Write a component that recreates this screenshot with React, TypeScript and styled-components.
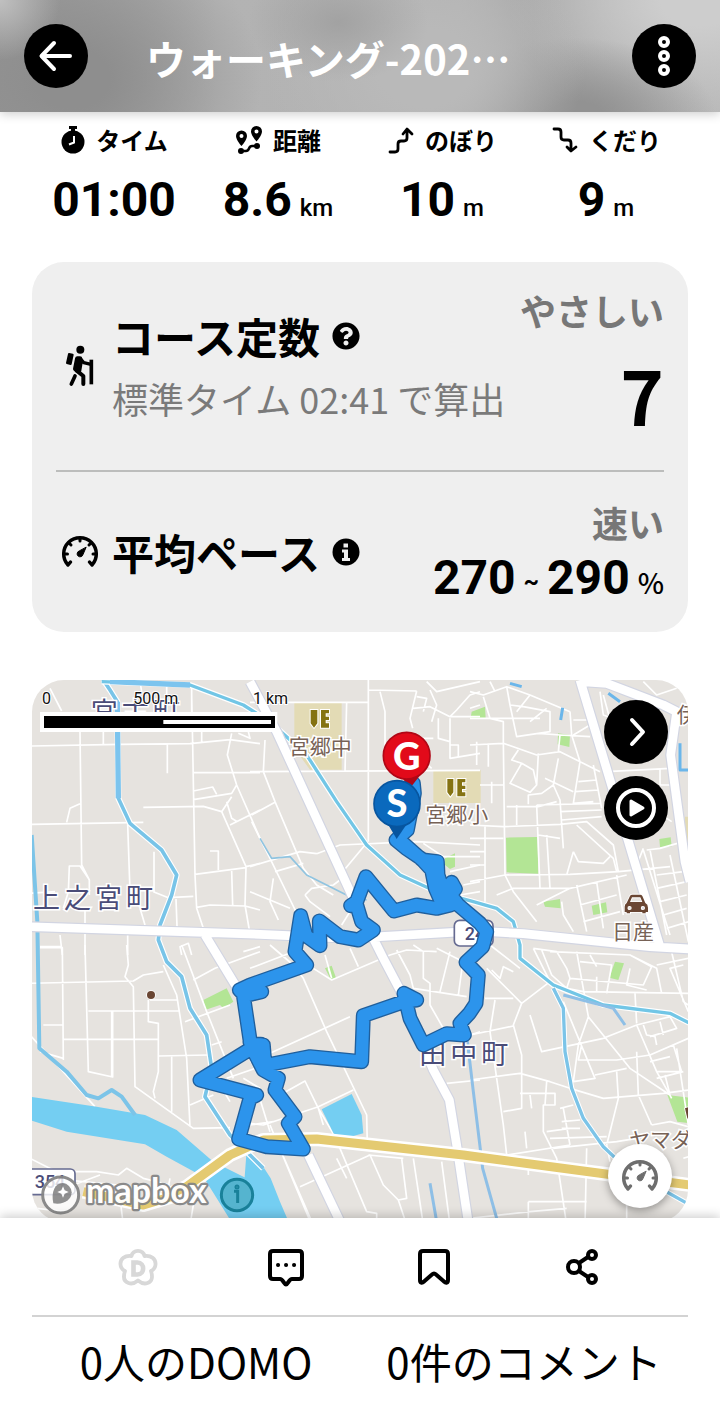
import React from "react";
import styled, { createGlobalStyle } from "styled-components";
import { FaQuestionCircle } from "react-icons/fa";

const JP = `"Noto Sans CJK JP", "Noto Sans", sans-serif`;
const NUM = `Roboto, "Noto Sans CJK JP", sans-serif`;

const GlobalStyle = createGlobalStyle`
  *, *::before, *::after { box-sizing: border-box; }
  body { margin: 0; background: #fff; color: #000; font-family: ${JP}; }
  button { border: 0; padding: 0; background: none; color: inherit; font: inherit; cursor: pointer; }
  svg { display: block; flex: none; }
`;

const Screen = styled.div`
  display: flex;
  flex-direction: column;
  height: 100vh;
`;

const Header = styled.header`
  position: relative;
  z-index: 2;
  flex: none;
  display: flex;
  align-items: center;
  justify-content: space-between;
  height: 112px;
  padding: 0 24px;
  box-shadow: 0 2px 10px rgba(0, 0, 0, 0.2);
  background:
    radial-gradient(ellipse 60px 60px at 0% 0%, #c0c0c0, transparent),
    radial-gradient(ellipse 190px 150px at 10% 70%, #8e8e8e 20%, transparent),
    radial-gradient(ellipse 90px 60px at 47% 20%, #a2a2a2, transparent),
    radial-gradient(ellipse 160px 130px at 59% 60%, #b9b9b9 30%, transparent),
    radial-gradient(ellipse 140px 80px at 80% 105%, #929292 20%, transparent),
    radial-gradient(ellipse 190px 130px at 97% 0%, #cdcdcd 20%, transparent),
    linear-gradient(90deg, #989898, #b3b3b3 30%, #b2b2b2 64%, #a6a6a6 74%, #b6b6b6);
`;

const Title = styled.h1`
  flex: 1;
  margin: 0 58px;
  padding-top: 4px;
  color: #fff;
  font-size: 40px;
  line-height: 64px;
  font-weight: 700;
  white-space: nowrap;
`;

const RoundButton = styled.button<{ $light?: boolean }>`
  display: grid;
  place-items: center;
  flex: none;
  width: 64px;
  height: 64px;
  border-radius: 50%;
  background: ${(p) => (p.$light ? "#fff" : "#000")};
  color: ${(p) => (p.$light ? "#6e6e6e" : "#fff")};
  box-shadow: ${(p) => (p.$light ? "0 3px 8px rgba(0, 0, 0, 0.35)" : "none")};
`;

const Main = styled.main`
  flex: 1;
  min-height: 0;
  overflow-y: auto;
  scrollbar-width: none;
  padding: 12px 32px 0;
`;

const Stats = styled.dl`
  display: grid;
  grid-template-columns: repeat(4, 1fr);
  margin: 0 0 26px;
`;

const Stat = styled.div`
  display: flex;
  flex-direction: column;
  align-items: center;
  gap: 16px;
`;

const StatLabel = styled.dt`
  display: flex;
  align-items: center;
  gap: 10px;
  font-size: 24px;
  line-height: 32px;
  font-weight: 700;
  white-space: nowrap;
`;

const StatValue = styled.dd`
  margin: 0;
  font: 700 48px/56px ${NUM};
  white-space: nowrap;
`;

const Unit = styled.span`
  margin-left: 8px;
  font-size: 24px;
  font-weight: 500;
`;

const Card = styled.section`
  padding: 0 24px;
  border-radius: 32px;
  background: #efefef;
`;

const Result = styled.div`
  display: flex;
  flex-direction: column;
  align-items: flex-end;
  white-space: nowrap;
`;

const CardRow = styled.div<{ $height: number }>`
  display: flex;
  align-items: center;
  gap: 8px;
  min-height: ${(p) => p.$height}px;

  & + & {
    border-top: 2px solid #bcbdbc;
  }

  & + & ${Result} {
    padding-top: 6px;
  }
`;

const IconSlot = styled.span`
  display: grid;
  place-items: center;
  flex: none;
  width: 48px;
`;

const RowText = styled.div`
  flex: 1;
  min-width: 0;
`;

const RowTitle = styled.h2`
  display: flex;
  align-items: center;
  gap: 12px;
  margin: 0;
  font-size: 42px;
  line-height: 64px;
  font-weight: 700;
  white-space: nowrap;
`;

const RowNote = styled.p`
  margin: 0;
  color: #7a7a7a;
  font-size: 36px;
  line-height: 60px;
  font-weight: 400;
  white-space: nowrap;
`;

const Grade = styled.span`
  color: #777;
  font-size: 36px;
  line-height: 56px;
  font-weight: 700;
`;

const BigNumber = styled.strong`
  font-size: 74px;
  line-height: 112px;
  font-weight: 700;
`;

const Range = styled.strong`
  font: 700 48px/56px ${NUM};
`;

const RangeMark = styled.span`
  margin: 0 8px;
  font-size: 24px;
  line-height: 32px;
  vertical-align: middle;
`;

const Percent = styled.span`
  margin-left: 8px;
  font-family: ${JP};
  font-size: 28px;
  font-weight: 500;
`;

const MapCard = styled.section`
  position: relative;
  height: 542px;
  margin-top: 48px;
  border-radius: 32px;
  overflow: hidden;
`;

const MapTools = styled.div`
  position: absolute;
  top: 20px;
  right: 20px;
  display: grid;
  gap: 12px;
`;

const PaceTool = styled.div`
  position: absolute;
  right: 16px;
  bottom: 14px;
`;

const Footer = styled.footer`
  position: relative;
  z-index: 2;
  flex: none;
  padding: 0 32px;
  background: #fff;
  box-shadow: 0 -2px 10px rgba(0, 0, 0, 0.2);
`;

const Actions = styled.div`
  display: grid;
  grid-template-columns: repeat(4, 1fr);
  padding: 0 32px;
  height: 97px;
`;

const Action = styled.button`
  display: grid;
  place-items: center;
`;

const Counts = styled.div`
  display: grid;
  grid-template-columns: repeat(2, 1fr);
  height: 90px;
  border-top: 2px solid #d3d3d3;
`;

const Count = styled.button`
  font-size: 42px;
  line-height: 64px;
  font-weight: 400;
  white-space: nowrap;
`;

const stroke = {
  fill: "none",
  stroke: "currentColor",
  strokeLinecap: "round" as const,
  strokeLinejoin: "round" as const,
};

const BackIcon = () => (
  <svg width="40" height="40" viewBox="0 0 40 40" {...stroke} strokeWidth="4">
    <path d="M34 20H6M18 7L5.500 20L18 33" />
  </svg>
);

const MoreIcon = () => (
  <svg width="20" height="44" viewBox="0 0 20 44" {...stroke} strokeWidth="4">
    <circle cx="10" cy="8" r="4" />
    <circle cx="10" cy="22" r="4" />
    <circle cx="10" cy="36" r="4" />
  </svg>
);

const TimerIcon = () => (
  <svg width="26" height="30" viewBox="0 0 26 30">
    <path d="M9 1h8v3h-2v3h-4V4H9z" />
    <circle cx="13" cy="17" r="11.500" />
    <path d="M14 11v6.500l-5 2" fill="none" stroke="#fff" strokeWidth="2" />
  </svg>
);

const DistanceIcon = () => (
  <svg width="28" height="30" viewBox="0 0 28 30">
    <path
      fillRule="evenodd"
      d="M6.500 5.500a5.500 5.500 0 0 1 5.500 5.500c0 4-5.500 10-5.500 10s-5.500-6-5.500-10a5.500 5.500 0 0 1 5.500-5.500zm0 3.500a2 2 0 1 0 0 4a2 2 0 0 0 0-4zM21.500 1a5.500 5.500 0 0 1 5.500 5.500c0 4-5.500 10-5.500 10s-5.500-6-5.500-10a5.500 5.500 0 0 1 5.500-5.500zm0 3.500a2 2 0 1 0 0 4a2 2 0 0 0 0-4z"
    />
    <path d="M6 26h5c4 0 2-5 6-5h5" fill="none" stroke="#000" strokeWidth="2.500" />
    <circle cx="6" cy="26" r="3" />
    <circle cx="22" cy="21" r="3" />
  </svg>
);

const ClimbIcon = () => (
  <svg width="28" height="28" viewBox="0 0 28 28" {...stroke} strokeWidth="2.800">
    <path d="M3 26h5q3 0 3-3v-5q0-3 3-3h3q3 0 3-3V4M16 8l4-5l5 5" />
  </svg>
);

const DescentIcon = () => (
  <svg width="28" height="28" viewBox="0 0 28 28" {...stroke} strokeWidth="2.800">
    <path d="M3 3h4q3 0 3 3v5q0 3 3 3h4q3 0 3 3v7M16 21l4 4l5-4" />
  </svg>
);

const HikerIcon = () => (
  <svg width="36" height="44" viewBox="98 252 108 132" {...stroke}>
    <circle cx="153" cy="269" r="12" fill="currentColor" stroke="none" />
    <path d="M119 282l11 2l-6 28l-11-3z" fill="currentColor" strokeWidth="6" />
    <path d="M144 296l8 0l1 12l-4 24l-11-5z" fill="currentColor" strokeWidth="14" />
    <path d="M154 297l9 11l22 5" strokeWidth="10" />
    <path d="M186 299v74" strokeWidth="11" strokeLinecap="butt" />
    <path d="M141 331l21 17v24" strokeWidth="12" />
    <path d="M137 348l-11 24" strokeWidth="11" />
  </svg>
);

const InfoIcon = () => (
  <svg width="28" height="28" viewBox="0 0 28 28">
    <circle cx="14" cy="14" r="13.500" />
    <path d="M11.500 5.500h4.500v4h-4.500zM10 11.500h6v8.500h2v3h-8v-3h2v-5.500h-2z" fill="#efefef" />
  </svg>
);

const GaugeIcon = () => (
  <svg width="40" height="40" viewBox="0 0 40 40" {...stroke} strokeWidth="3.500">
    <path d="M8 33A16.300 16.300 0 1 1 32 33M8 33l2.500-3M32 33l-2.500-3" />
    <path d="M4 22h3.500M33 22h3.500M20 6v3M9 11l2 2M31 11l-2 2" strokeWidth="3" />
    <path d="M26 15.500l-3 7a3 3 0 1 1-4-3.500z" fill="currentColor" strokeWidth="1" />
  </svg>
);

const ChevronIcon = () => (
  <svg width="36" height="36" viewBox="0 0 36 36" {...stroke} strokeWidth="4">
    <path d="M14 6l11 12l-11 12" />
  </svg>
);

const PlayIcon = () => (
  <svg width="42" height="42" viewBox="0 0 42 42" {...stroke} strokeWidth="3">
    <circle cx="21" cy="21" r="18" strokeWidth="4" />
    <path d="M16 14l12 7l-12 7z" fill="currentColor" />
  </svg>
);

const DomoIcon = () => (
  <svg width="42" height="42" viewBox="0 0 42 42" {...stroke} strokeWidth="3.800" color="#d8d8d8">
    <path d="M14.500 10A6.700 6.700 0 0 1 27.500 10C34 9 39 13 38.500 18.500C38.300 22 36 24 34 25C36 31 35 35.500 30.500 37C27 38.300 24 37 21 34.500C18 37 15 38.300 11.500 37C7 35.500 6 31 8 25C6 24 3.700 22 3.500 18.500C3 13 8 9 14.500 10Z" />
    <path d="M16.500 16.500h4c7.500 0 7.500 12 0 12h-4z" strokeWidth="4.600" strokeLinejoin="miter" />
  </svg>
);

const CommentIcon = () => (
  <svg width="40" height="40" viewBox="0 0 40 40" {...stroke} strokeWidth="4">
    <path d="M7 4h26q3 0 3 3v22q0 3-3 3h-7c-3 0-4 5.500-6 5.500S17 32 14 32H7q-3 0-3-3V7q0-3 3-3z" />
    <path d="M12 18h.1M20 18h.1M28 18h.1" />
  </svg>
);

const BookmarkIcon = () => (
  <svg width="36" height="40" viewBox="0 0 36 40" {...stroke} strokeWidth="4">
    <path d="M7 4h22q3 0 3 3v26c0 3-2 3.500-4 1.500l-8-7q-2-2-4 0l-8 7C6 36.500 4 36 4 33V7q0-3 3-3z" />
  </svg>
);

const ShareIcon = () => (
  <svg width="36" height="40" viewBox="0 0 36 40" {...stroke} strokeWidth="4">
    <circle cx="10" cy="20" r="6" />
    <circle cx="28" cy="8" r="4" />
    <circle cx="28" cy="32" r="4" />
    <path d="M15 16l9-6M15 24l9 6" />
  </svg>
);

/* The map is drawn on a grid of six tiles; each tile keeps its own coordinates. */
const minorRoads: { x: number; y: number; d: string }[] = [
  {
    x: 0,
    y: 0,
    d: `M0 213L270 208L480 206L600 194L690 206M0 448L340 442M340 397L520 394L575 410L605 365M150 170L155 570L178 615V660
    M220 170V208M412 208V295M485 60L488 208L495 600L500 700L520 760M490 293H690M605 175L592 240L620 330L690 490M490 348L548 336L560 358M490 374L605 355L620 330
    M575 410L648 575L690 565M495 598L648 578L645 690L658 765M500 697L540 690L645 693L690 705M110 442L120 400L150 386M540 528H565V585M605 588L608 690M600 450L690 405M590 380L605 430L622 440
    M293 448L300 650M372 530V650M100 700L115 650L118 573H150L175 610M0 655L75 650M370 650L415 668L490 664M165 705V840M330 700L345 750M438 672L442 780M293 780V840M90 780L97 840M30 815H95M655 170L660 190L625 175M515 170V200M60 40L95 108M330 20L335 50M410 20V60M485 30V110M455 840L450 815L475 805L485 840M640 830L690 815`,
  },
  {
    x: 660,
    y: 0,
    d: `M0 82H355M355 15V500M355 45L500 48M390 50L405 110V255M500 48L480 130L488 160M45 195L40 290L75 380L160 580L200 630L250 660M0 290L690 286M290 80L285 290M200 536L270 510L500 500M5 420L75 382M5 440L60 550L150 735M0 575L150 530L200 536M75 590L160 565M345 510L270 600L330 690M490 100L540 95L600 125H690M540 45L560 90L545 140M600 130V250L690 235M565 130V190L600 200M550 190H510V250L545 280M600 210H625V245M620 105L660 60L690 50M620 105L600 125M500 500L690 510M520 505L580 545L690 545M600 590L690 570M640 630L690 620M630 660L690 650M165 660L185 640L250 630L290 600M165 660L180 680L240 725M70 610L60 680L85 735M0 650L120 700M275 750L300 710M530 20L560 50L690 20M500 65L530 70L520 110`,
  },
  {
    x: 1320,
    y: 0,
    d: `M0 50L40 60L110 35L180 60L300 110M40 65L60 130L100 140V200L105 600M0 130L210 130M0 210L100 205L200 240L270 230L390 290M60 20L75 50M110 35L120 90L160 95L240 110V170L140 185L120 90M140 185L205 175L270 180L360 185M270 180L265 230M145 225L125 255L155 265L120 325L180 352L200 330L190 285L155 265M205 235L200 330M300 110L305 180L330 260L310 385L370 380M370 270L395 400M265 250L250 330L215 355L175 360V388M250 330L270 375L280 520M30 330H100M65 320V385M200 390L390 385M110 395H205L260 380M0 450L100 455L270 448L350 440L430 510L445 590M45 455V680M0 490H100M0 530H45M0 570H45M200 390L210 640M105 600L300 598L445 590L600 575M230 480L240 640M270 410L395 405M275 435L395 425M315 350L385 345M325 320L380 315M320 450L430 550L440 590M310 530L290 600M310 530L325 560L400 565L420 545M205 480L270 490M0 620L105 600L130 650L200 740M80 660L130 640L300 640L200 690M320 630L350 770M300 640L470 600M330 690L440 660M340 740L450 710M380 620L400 760M440 600L460 720M275 680L280 720L310 770M360 150L310 180M225 310L310 350M310 135H350M390 50L400 120L440 135M520 20L560 60L620 40M410 290L600 280M570 280V330H610M540 525L590 780M520 525L600 780M560 600L640 590M560 640L650 620M570 680L650 660M580 720L650 700M590 760L655 740M530 525L570 520L640 500M600 540L655 800M545 400L605 440M500 570L520 520M30 90L0 100M20 200V270M55 205V275M180 60L140 110M180 140L230 100M140 390V450M430 170L400 60`,
  },
  {
    x: 0,
    y: 810,
    d: `M0 115L310 108L340 90L400 80M30 8H97L100 345M165 0L175 380L248 396V200M175 198H450M360 165H440M355 165V230L385 235V380L370 440L375 460M245 200V395M100 283H385M40 240H100M290 0L295 60L285 95L310 125L315 425L490 550L600 548M385 333L535 330M425 335V500M400 60L440 150L470 340L480 545M455 0L530 200L610 400M490 105L555 70L690 20M465 230L600 180M545 300L575 290M480 480L550 450M0 640L80 680H200L265 690L290 670L340 700L420 720M590 400L690 365M30 320L100 340M0 270L195 485M570 420L600 470M640 400L690 430M60 700L265 720L280 840M420 700L410 750L500 730M490 780L480 840M130 720L210 690M20 790L110 800`,
  },
  {
    x: 660,
    y: 810,
    d: `M60 0L130 60L160 100L230 260L350 510L352 600M60 325L300 215M0 350L50 330M190 70L245 105L420 30L470 15L560 20M225 30L245 100M300 10L325 65M245 100L235 70M130 20L0 70M490 0L520 20V100L540 115V180L580 250M440 15L480 90L490 130L650 155M600 20L570 140M640 40L625 150M560 10L640 50M660 270L690 260M590 415L690 405M90 450L165 408L205 490L255 575L350 800L380 805V840M0 535L40 540L205 485L310 435M20 430L60 560M60 540L185 840M85 600L190 840M150 725L360 630L400 720L445 765L470 760L455 640M355 630L460 640M490 640L520 840M575 650L600 840M445 765L470 840M205 490L220 540M0 540L70 530M290 700L260 640`,
  },
  {
    x: 1320,
    y: 810,
    d: `M190 10L225 80L240 110M215 15L245 90L290 130L340 140L655 145M50 70L155 175L240 110M60 0L150 70M65 75L90 100L100 65L130 80M45 160H130M75 165L60 260L100 540L110 630M155 175L130 240L155 330V490L100 500M0 270L130 243M180 210L215 320L400 280L500 240L600 215M0 405L150 385L240 410L300 430L400 460L580 445L655 435M150 445H255V480H220V560L260 640L290 840M180 450L185 490M230 410L225 480M280 170L375 400L310 410L325 300L355 215L320 20M355 215L480 370L600 450M335 300L325 345H440L540 330L655 280M440 380L445 460L410 600M500 320L505 450L545 540M375 390L470 370M500 240L560 380L605 460M545 540L600 530L655 545M500 235L495 145M410 145L425 60L330 50M240 20L480 30L560 70L575 145M190 10L260 20L290 70L300 100L520 120L545 65L480 30M300 100L290 130M380 95V140M480 70L470 120L530 135M380 65L360 30M520 240L530 270L555 275L560 300M600 215L620 250L540 275M570 230L580 270M610 300L635 380L560 380M620 310L655 540M540 350L600 335M560 400L640 380M585 390L600 450M640 60L600 70L655 200M600 0L640 170L655 180M230 560L300 550M240 580L410 575M250 610L440 590L500 580M280 490L300 600M270 490L310 480M165 560L170 610M110 630L300 600M350 610L345 840M175 690V660M175 770H350M175 770V840M0 820L180 800L290 790M470 780V840M410 600L420 650M640 640L655 635M560 60L655 40M275 530L330 525M275 550H330`,
  },
];

const route = `M1150 325L1153 355L1132 465L1098 495L1128 520L1180 555L1222 560L1224 600L1240 650L1265 622L1276 642L1262 660L1285 690L1350 745L1370 770
  L1358 815L1308 862L1345 900L1338 985L1318 1015L1290 1045L1303 1080L1250 1076L1180 1110L1140 1030L1122 955L1160 975L1122 980L1000 1022L995 1160L840 1145L710 1170
  L692 1108L662 1108L640 960L695 950L645 962L628 945L660 930L830 870L795 830L812 722L828 782L870 812L868 738L930 785L985 795L1030 765L995 740L980 690L962 692L980 680L1008 605L1092 708L1160 690L1220 700L1262 690
  M1120 505L1180 558L1205 585L1216 640L1238 690L1250 650
  M672 1115L510 1215L680 1260L660 1270L626 1392L710 1415L820 1422L775 1345L795 1325L735 1245L745 1210L700 1185L672 1130L660 1100M700 1110L704 1160L680 1120`;

const majorRoads =
  "M0 755L690 778L960 790L1340 768L1480 776L1860 815L1980 822M660 20L740 170L965 660L1060 850L1110 945L1210 1185L1258 1275L1280 1410L1316 1650M835 1440L935 1650M525 780L640 970M1650 15L1890 815M1655 20L1730 25L1900 90L1980 130M1940 110L1922 240L1965 560L1980 620";

const westRiver =
  "M220 15L240 45L262 80L265 370L300 445L395 525L440 600L425 660L390 750L385 795L410 860L455 905L480 1000L530 1080L545 1180L525 1265L600 1380L700 1480";
const eastRiver =
  "M215 20L480 30L640 90L720 140L830 240L920 380L1010 510L1110 600L1220 650L1330 680L1400 700L1450 740L1470 810V850L1570 930L1720 990L1920 1015L1980 1045";
const southRiver = "M1570 940L1600 1000L1605 1130L1625 1240L1660 1330L1720 1415L1800 1490L1900 1545L1980 1590";
const highway =
  "M400 1565L470 1535L600 1440L700 1395L860 1392L1300 1440L1750 1500L1980 1530M440 1560L340 1590L160 1550";

const LABEL = "#4a4c78";
const POI = "#776256";

const RouteMap = () => (
  <svg width="100%" height="542" viewBox="6 15 1968 1626" preserveAspectRatio="xMidYMid slice" role="img" aria-label="ルート地図">
    <rect x="-1000" width="4000" height="1700" fill="#e6e3df" />
    <g fill="#b3e595">
      <path d="M1428 488L1522 486L1525 596L1430 592zM1325 110L1365 95L1367 130L1322 128zM1584 175L1620 180L1618 216L1583 208zM1540 680L1590 672L1592 700L1545 695zM1685 692L1728 682L1732 712L1690 720zM1888 492L1922 487L1925 514L1890 516zM1245 550L1275 535L1275 575L1260 582L1245 570z" />
      <path d="M520 975L590 940L610 980L580 1000L570 990L525 1005zM885 880L905 872L918 908L902 913zM1755 860L1782 865L1765 915L1738 908zM1912 1260L1980 1268V1345L1942 1340z" />
    </g>
    <path d="M793 84H935V284H840L793 220zM1210 286H1352V384H1210zM1965 425H1980V520H1965z" fill="#e3dbb5" />
    <g fill="none" stroke="#fff" strokeWidth="5" strokeLinejoin="round">
      {minorRoads.map((tile) => (
        <path key={`${tile.x}-${tile.y}`} d={tile.d} transform={`translate(${tile.x} ${tile.y})`} />
      ))}
    </g>
    <g fill="#74cef2">
      <path d="M0 1265L200 1295L345 1320L440 1365L550 1460L700 1535L760 1650H610L520 1505L410 1445L345 1408L110 1370L0 1335z" />
      <path d="M875 1303L965 1257L995 1320L1000 1375L945 1390L912 1378z" />
      <path d="M650 1425L690 1460L722 1510L750 1580L780 1650H700L640 1560z" />
    </g>
    <g fill="none" strokeLinejoin="round">
      <path d={westRiver} stroke="#fff" strokeWidth="18" />
      <path d={westRiver} stroke="#78c4e8" strokeWidth="11" />
      <path d={eastRiver} stroke="#fff" strokeWidth="17" />
      <path d={eastRiver} stroke="#72c6e6" strokeWidth="10" />
      <path d={southRiver} stroke="#fff" strokeWidth="16" />
      <path d={southRiver} stroke="#7cc4e8" strokeWidth="10" />
      <path d="M262 80L265 370M240 20L480 30" stroke="#7cc4ee" strokeWidth="16" />
      <path d="M5 480L22 740L28 1120L110 1190L170 1260L205 1270L245 1245L275 1265L315 1320" stroke="#7cc4e8" strokeWidth="12" />
      <path d="M1310 1080L1330 1250L1358 1480L1400 1630M1200 1525L1220 1640M1600 960L1750 1000L1785 1050" stroke="#8ebfe6" strokeWidth="9" />
      <path d="M690 490L725 550L780 545L830 600L960 665L1010 675" stroke="#90c4e0" strokeWidth="5" />
      <path d="M1598 98L1592 135M1735 55L1770 80M1950 205V285H1980M1440 25L1475 35" stroke="#6bb6ea" strokeWidth="9" />
      <path d={majorRoads} stroke="#d2d5e2" strokeWidth="33" />
      <path d={majorRoads} stroke="#fff" strokeWidth="26" />
      <path d={highway} stroke="#fff" strokeWidth="42" />
      <path d={highway} stroke="#e4ca71" strokeWidth="27" />
    </g>

    <g fontFamily={JP} fill={LABEL} stroke="#fff" strokeWidth="9" paintOrder="stroke" fontSize="81">
      <text x="182" y="142" letterSpacing="12">宮古町</text>
      <text x="9" y="698" letterSpacing="12">上之宮町</text>
      <text x="1168" y="1168" letterSpacing="12">田中町</text>
      <g fill={POI} fontSize="63">
        <text x="776" y="238">宮郷中</text>
        <text x="1186" y="442">宮郷小</text>
        <text x="1746" y="793">日産</text>
        <text x="1797" y="1415">ヤマダ</text>
        <text x="1940" y="142">伊</text>
      </g>
    </g>

    <g fill="#857312" stroke="#fff" strokeWidth="6" paintOrder="stroke">
      <path d="M842 105h20v40l-10 13l-10-13zM873 105h24v10h-10v10h10v10h-10v10h10v13h-24zM1252 312h18v40l-9 12l-9-12zM1282 312h24v10h-10v10h10v10h-10v10h10v12h-24z" />
    </g>
    <g fill="#6a4633" stroke="#fff" strokeWidth="5" paintOrder="stroke">
      <path fillRule="evenodd" d="M1790 684l10-21q2-4 7-4h23q5 0 7 4l9 21q8 4 8 14v13h-7v4h-10v-4h-37v4h-10v-4h-6v-16q0-8 6-11zm10-3h37l-6-14h-25zm-2 12a6 6 0 1 0 1 12a6 6 0 0 0 0-12zm40 0a6 6 0 1 0 1 12a6 6 0 0 0 0-12z" />
      <circle cx="363" cy="960" r="12" />
      <path d="M1965 1300l15-5v40l-8-5z" />
    </g>

    <g fill="#fff" stroke="#666b91" strokeWidth="5">
      <rect x="1273" y="736" width="116" height="77" rx="16" />
      <rect x="-40" y="1482" width="175" height="77" rx="14" />
    </g>
    <g fontFamily={NUM} fontWeight="500" fontSize="54" fill={LABEL}>
      <text x="1304" y="794">24</text>
      <text x="14" y="1538">354</text>
    </g>

    <g fill="none" strokeLinejoin="round" strokeLinecap="round">
      <path d={route} stroke="#205f9c" strokeWidth="45" />
      <path d={route} stroke="#2c94ec" strokeWidth="37" />
    </g>

    <g textAnchor="middle" fontFamily="Lato, sans-serif" fontWeight="900" fontSize="114">
      <path d="M1110 300L1140 340L1175 295z" fill="#b00716" />
      <circle cx="1130" cy="242" r="70" fill="#e20a1a" stroke="#b00716" strokeWidth="5" />
      <text x="1130" y="284" fill="#fff">G</text>
      <path d="M1072 445L1100 492L1130 448z" fill="#07559f" />
      <circle cx="1101" cy="386" r="69" fill="#0a69bd" stroke="#07559f" strokeWidth="5" />
      <text x="1101" y="426" fill="#fff">S</text>
    </g>

    <g>
      <rect x="30" y="111" width="712" height="60" fill="#fff" />
      <rect x="42" y="123" width="693" height="36" />
      <rect x="400" y="135" width="323" height="12" fill="#fff" />
      <g fontFamily={NUM} fontSize="48" fill="#111" stroke="#fff" strokeWidth="6" paintOrder="stroke">
        <text x="36" y="88">0</text>
        <text x="310" y="88">500 m</text>
        <text x="669" y="88">1 km</text>
      </g>
    </g>

    <g opacity="0.95">
      <circle cx="92" cy="1560" r="54" fill="#fff" fillOpacity="0.85" stroke="#858585" strokeWidth="9" />
      <path d="M70 1585C62 1550 76 1524 98 1524A29 29 0 0 1 125 1552C125 1576 100 1590 70 1585z" fill="#8c8c8c" />
      <path d="M99 1534l5 12l12 5l-12 5l-5 12l-5-12l-12-5l12-5z" fill="#fff" />
      <text x="168" y="1584" fontFamily="Lato, sans-serif" fontWeight="700" fontSize="102" fill="#fff" stroke="#858585" strokeWidth="13" strokeLinejoin="round" paintOrder="stroke">mapbox</text>
    </g>
    <g fill="none" stroke="#19819a" strokeWidth="9">
      <circle cx="621" cy="1560" r="47" fill="#55b4cf" />
      <path d="M612 1549h11v35" />
      <circle cx="621" cy="1536" r="3" />
    </g>
  </svg>
);

export default function App() {
  return (
    <Screen lang="ja">
      <GlobalStyle />
      <Header>
        <RoundButton aria-label="戻る"><BackIcon /></RoundButton>
        <Title>ウォーキング-202…</Title>
        <RoundButton aria-label="メニュー"><MoreIcon /></RoundButton>
      </Header>

      <Main>
        <Stats>
          <Stat>
            <StatLabel><TimerIcon />タイム</StatLabel>
            <StatValue>01:00</StatValue>
          </Stat>
          <Stat>
            <StatLabel><DistanceIcon />距離</StatLabel>
            <StatValue>8.6<Unit>km</Unit></StatValue>
          </Stat>
          <Stat>
            <StatLabel><ClimbIcon />のぼり</StatLabel>
            <StatValue>10<Unit>m</Unit></StatValue>
          </Stat>
          <Stat>
            <StatLabel><DescentIcon />くだり</StatLabel>
            <StatValue>9<Unit>m</Unit></StatValue>
          </Stat>
        </Stats>

        <Card>
          <CardRow $height={208}>
            <IconSlot><HikerIcon /></IconSlot>
            <RowText>
              <RowTitle>コース定数<FaQuestionCircle size={28} /></RowTitle>
              <RowNote>標準タイム 02:41 で算出</RowNote>
            </RowText>
            <Result>
              <Grade>やさしい</Grade>
              <BigNumber>7</BigNumber>
            </Result>
          </CardRow>
          <CardRow $height={162}>
            <IconSlot><GaugeIcon /></IconSlot>
            <RowText>
              <RowTitle>平均ペース<InfoIcon /></RowTitle>
            </RowText>
            <Result>
              <Grade>速い</Grade>
              <Range>270<RangeMark>~</RangeMark>290<Percent>%</Percent></Range>
            </Result>
          </CardRow>
        </Card>

        <MapCard>
          <RouteMap />
          <MapTools>
            <RoundButton aria-label="次へ"><ChevronIcon /></RoundButton>
            <RoundButton aria-label="再生"><PlayIcon /></RoundButton>
          </MapTools>
          <PaceTool>
            <RoundButton $light aria-label="ペース"><GaugeIcon /></RoundButton>
          </PaceTool>
        </MapCard>
      </Main>

      <Footer>
        <Actions>
          <Action aria-label="DOMO"><DomoIcon /></Action>
          <Action aria-label="コメント"><CommentIcon /></Action>
          <Action aria-label="保存"><BookmarkIcon /></Action>
          <Action aria-label="共有"><ShareIcon /></Action>
        </Actions>
        <Counts>
          <Count>0人のDOMO</Count>
          <Count>0件のコメント</Count>
        </Counts>
      </Footer>
    </Screen>
  );
}
